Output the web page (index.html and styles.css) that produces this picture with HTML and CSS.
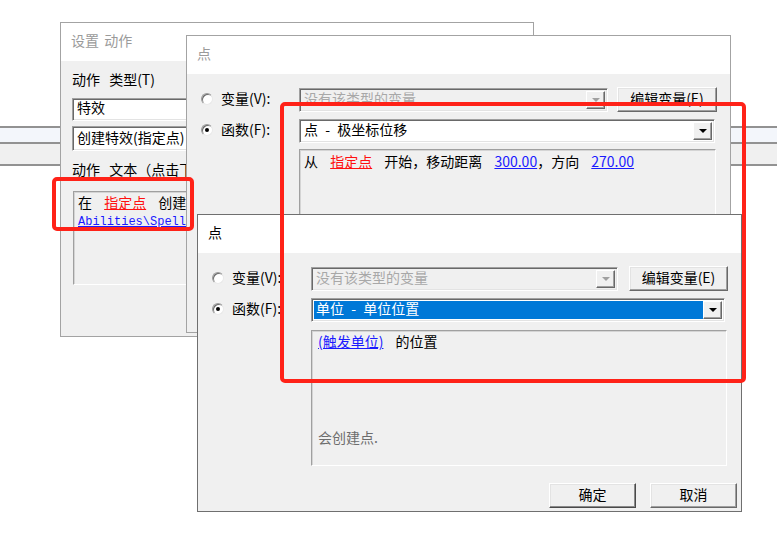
FILE: index.html
```html
<!DOCTYPE html>
<html>
  <head>
    <meta charset="utf-8">
    <link rel="stylesheet" href="styles.css">
  </head>
  <body>
    <!-- list rows of the editor behind the dialogs -->
    <div class="desk-stripes">
      <div class="rule"></div>
      <div class="band band-blue"></div>
      <div class="rule"></div>
      <div class="band band-gray"></div>
      <div class="rule"></div>
    </div>

    <div class="window win-action">
      <div class="title-bar inactive">设置 动作</div>
      <div class="action-body">
        <div class="field-label">动作 类型(T)</div>
        <div class="sunken edit-box">特效</div>
        <div class="sunken edit-box edit-tall">创建特效(指定点)</div>
        <div class="field-label">动作 文本（点击下划</div>
        <div class="sunken-flat text-panel">
          <div>在 <span class="link-red">指定点</span> 创建特效</div>
          <div class="link-path">Abilities\Spells\</div>
        </div>
      </div>
    </div>

    <div class="window win-point-back">
      <div class="title-bar inactive">点</div>
      <div class="point-body">
        <div class="point-row">
          <div class="choice"><span class="radio"></span>变量(V):</div>
          <div class="row-fields">
            <div class="sunken combo disabled combo-var">
              <div class="combo-text">没有该类型的变量</div>
              <div class="combo-arrow">
                <svg width="8" height="4" viewBox="0 0 8 4"><path d="M0 0h8L4 4z" fill="#a0a0a0"/></svg>
              </div>
            </div>
            <div class="raised push edit-var">编辑变量(E)</div>
          </div>
        </div>
        <div class="point-row">
          <div class="choice"><span class="radio checked"></span>函数(F):</div>
          <div class="row-fields">
            <div class="sunken combo combo-func">
              <div class="combo-text">点 - 极坐标位移</div>
              <div class="combo-arrow">
                <svg width="8" height="4" viewBox="0 0 8 4"><path d="M0 0h8L4 4z" fill="#000"/></svg>
              </div>
            </div>
          </div>
        </div>
        <div class="sunken-flat param-box back-box">
          <div>从 <span class="link-red">指定点</span> 开始，移动距离 <span class="link-blue">300.00</span>，方向 <span class="link-blue">270.00</span></div>
        </div>
      </div>
    </div>

    <div class="window win-point-front">
      <div class="title-bar">点</div>
      <div class="point-body">
        <div class="point-row">
          <div class="choice"><span class="radio"></span>变量(V):</div>
          <div class="row-fields">
            <div class="sunken combo disabled combo-var front-var">
              <div class="combo-text">没有该类型的变量</div>
              <div class="combo-arrow">
                <svg width="8" height="4" viewBox="0 0 8 4"><path d="M0 0h8L4 4z" fill="#a0a0a0"/></svg>
              </div>
            </div>
            <div class="raised push edit-var front-edit">编辑变量(E)</div>
          </div>
        </div>
        <div class="point-row">
          <div class="choice"><span class="radio checked"></span>函数(F):</div>
          <div class="row-fields">
            <div class="sunken combo combo-func front-func">
              <div class="combo-text selected">单位 - 单位位置</div>
              <div class="combo-arrow">
                <svg width="8" height="4" viewBox="0 0 8 4"><path d="M0 0h8L4 4z" fill="#000"/></svg>
              </div>
            </div>
          </div>
        </div>
        <div class="sunken-flat param-box front-box">
          <div><span class="link-blue">(触发单位)</span> 的位置</div>
          <div class="hint">会创建点.</div>
        </div>
        <div class="dialog-buttons">
          <div class="raised push default-push">确定</div>
          <div class="raised push">取消</div>
        </div>
      </div>
    </div>

    <div class="callout callout-text"></div>
    <div class="callout callout-dialog"></div>
  </body>
</html>
```

FILE: styles.css
```css
body {
  margin: 0;
  background: #fff;
  font-family: "Noto Sans CJK SC", sans-serif;
  font-size: 14px;
  line-height: 20px;
  color: #000;
  word-spacing: 9px;
}

/* background list rows */
.desk-stripes {
  margin-top: 126px;
}

.rule {
  height: 2px;
  background: #929292;
}

.band-blue {
  height: 14px;
  background: #f3f6fb;
}

.band-gray {
  height: 20px;
  background: #f0f0f0;
}

/* dialog windows */
.window {
  position: absolute;
  box-sizing: border-box;
  background: #f0f0f0;
  border: 1px solid #a3a3a3;
  overflow: hidden;
}

.win-action {
  left: 60px;
  top: 22px;
  width: 474px;
  height: 315px;
}

.win-point-back {
  left: 186px;
  top: 35px;
  width: 545px;
  height: 298px;
}

.win-point-front {
  left: 197px;
  top: 214px;
  width: 545px;
  height: 298px;
  border-color: #6f6f6f;
}

.title-bar {
  box-sizing: border-box;
  height: 38px;
  line-height: 34px;
  padding: 0 0 4px 10px;
  background: #fff;
  color: #000;
  word-spacing: 2px;
}

.title-bar.inactive {
  color: #9a9a9a;
}

/* classic 3d borders */
.sunken {
  box-sizing: border-box;
  border: 1px solid;
  border-color: #a0a0a0 #fff #fff #a0a0a0;
  box-shadow: inset 1px 1px 0 #696969, inset -1px -1px 0 #e3e3e3;
}

.sunken-flat {
  box-sizing: border-box;
  border: 1px solid;
  border-color: #a0a0a0 #fff #fff #a0a0a0;
  box-shadow: inset 1px 1px 0 #d4d4d4;
}

.raised {
  box-sizing: border-box;
  border: 1px solid;
  border-color: #fff #696969 #696969 #fff;
  box-shadow: inset -1px -1px 0 #a0a0a0, inset 1px 1px 0 #e3e3e3;
  background: #f0f0f0;
}

/* set action window */
.action-body {
  display: flex;
  flex-direction: column;
  padding: 10px 11px;
}

.field-label {
  height: 20px;
  line-height: 16px;
  word-spacing: 6px;
}

.edit-box {
  height: 23px;
  margin-top: 7px;
  padding: 0 4px;
  line-height: 17px;
  background: #fff;
  word-spacing: 0;
}

.edit-tall {
  height: 25px;
  margin-top: 5px;
  line-height: 20px;
}

.action-body .field-label + .text-panel {
  margin-top: 10px;
}

.edit-tall + .field-label {
  margin-top: 10px;
}

.text-panel {
  height: 94px;
  margin-left: 1px;
  padding: 1px 4px;
  line-height: 19px;
  white-space: nowrap;
}

.link-red {
  color: #ff1010;
  text-decoration: underline;
  word-spacing: 0;
}

.link-blue {
  color: #1a1aff;
  text-decoration: underline;
  word-spacing: 0;
}

.link-path {
  margin-top: 1px;
  font-family: "Liberation Mono", monospace;
  font-size: 12px;
  color: #1a1aff;
  text-decoration: underline;
  word-spacing: 0;
}

/* point dialogs */
.point-body {
  display: flex;
  flex-direction: column;
  gap: 6px;
  padding: 13px 0 0 14px;
}

.point-row {
  display: flex;
  align-items: center;
  height: 25px;
}

.choice {
  box-sizing: border-box;
  display: flex;
  align-items: center;
  gap: 8px;
  width: 98px;
  height: 25px;
  padding-bottom: 4px;
  flex: none;
  white-space: nowrap;
  word-spacing: 0;
}

.win-point-front .choice {
  width: 99px;
}

.radio {
  position: relative;
  width: 12px;
  height: 12px;
  margin-top: 2px;
  box-sizing: border-box;
  border-radius: 50%;
  background: #fff;
  border: 1px solid;
  border-color: #9a9a9a #e8e8e8 #e8e8e8 #9a9a9a;
  box-shadow: inset 1px 1px 0 #6a6a6a;
}

.radio.checked::after {
  content: "";
  position: absolute;
  left: 3px;
  top: 3px;
  width: 4px;
  height: 4px;
  border-radius: 50%;
  background: #000;
}

.row-fields {
  display: flex;
  align-items: center;
  gap: 9px;
}

.combo {
  display: flex;
  height: 24px;
  padding: 2px;
  background: #fff;
}

.combo.disabled {
  background: #f0f0f0;
  color: #a8a8a8;
}

.combo-var {
  width: 309px;
}

.combo-func {
  width: 416px;
}

.front-var {
  width: 307px;
  color: #8a8a8a;
}

.front-func {
  width: 414px;
}

.win-point-front .row-fields {
  gap: 11px;
}

.combo-text {
  flex: 1;
  line-height: 15px;
  padding-left: 2px;
  white-space: nowrap;
  word-spacing: 4px;
}

.combo-text.selected {
  background: #0078d7;
  color: #fff;
}

.combo-arrow {
  box-sizing: border-box;
  width: 19px;
  display: flex;
  align-items: center;
  justify-content: center;
  border: 1px solid;
  border-color: #fff #696969 #696969 #fff;
  box-shadow: inset -1px -1px 0 #a0a0a0;
  background: #f0f0f0;
}

.push {
  height: 25px;
  padding-bottom: 4px;
  display: flex;
  align-items: center;
  justify-content: center;
  word-spacing: 0;
}

.edit-var {
  width: 100px;
}

.front-edit {
  width: 99px;
}

.param-box {
  display: flex;
  flex-direction: column;
  justify-content: space-between;
  margin-left: 98px;
  padding: 0 4px 18px;
}

.back-box {
  width: 417px;
  height: 170px;
  padding-top: 1px;
}

.front-box {
  width: 416px;
  height: 136px;
  margin-left: 99px;
  margin-top: 2px;
  padding-left: 6px;
}

.hint {
  color: #6d6d6d;
}

.dialog-buttons {
  display: flex;
  justify-content: flex-end;
  gap: 14px;
  margin-top: 11px;
  padding-right: 4px;
}

.dialog-buttons .push {
  width: 87px;
}

.default-push {
  border-color: #fff #4a4a4a #4a4a4a #fff;
  box-shadow: inset -1px -1px 0 #8a8a8a, inset 1px 1px 0 #e3e3e3;
}

/* red highlight frames drawn over the screenshot */
.callout {
  position: absolute;
  box-sizing: border-box;
  border: 4px solid #ff2218;
  border-radius: 5px;
}

.callout-text {
  left: 52px;
  top: 177px;
  width: 142px;
  height: 54px;
}

.callout-dialog {
  left: 280px;
  top: 102px;
  width: 466px;
  height: 281px;
}
```
